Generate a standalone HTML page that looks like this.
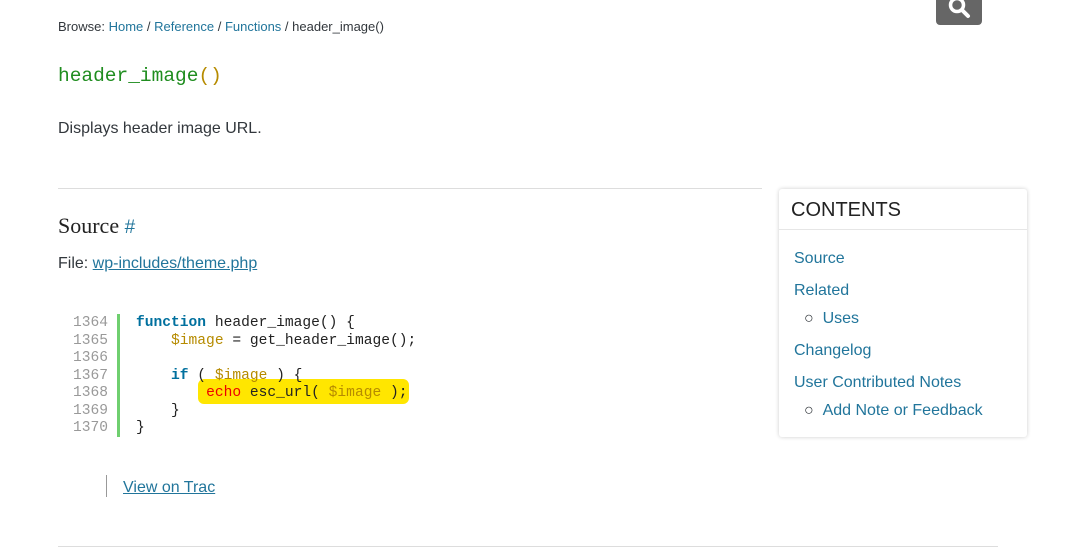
<!DOCTYPE html>
<html><head><style>
body{margin:0;width:1088px;height:560px;background:#fff;position:relative;overflow:hidden;font-family:"Liberation Sans",sans-serif;color:#32373c}
.a{position:absolute;white-space:nowrap}
a{color:#21759b;text-decoration:none}
.u{text-decoration:underline}
.code{font-family:"Liberation Mono",monospace;font-size:14.6px;line-height:17.5px}
.ln{color:#999;text-align:right;width:52px}
.k{color:#00709e;font-weight:bold}
.v{color:#b68b00}
.e{color:#e00}
</style></head><body>
<div class="a" style="left:936px;top:-6px;width:46px;height:31px;background:#666;border-radius:4px">
<svg width="46" height="31" viewBox="0 0 46 31"><circle cx="21" cy="11" r="6.5" fill="none" stroke="#fff" stroke-width="3.5"/><line x1="26" y1="16" x2="32" y2="22" stroke="#fff" stroke-width="4" stroke-linecap="round"/></svg></div>
<div class="a" style="left:58px;top:19px;font-size:13px;color:#32373c">Browse: <a>Home</a> / <a>Reference</a> / <a>Functions</a> / header_image()</div>
<div class="a" style="left:58px;top:65px;font-family:'Liberation Mono',monospace;font-size:19.5px;color:#1f8d1f">header_image<span style="color:#b68b00">()</span></div>
<div class="a" style="left:58px;top:120px;font-size:16px">Displays header image URL.</div>
<div class="a" style="left:58px;top:188px;width:704px;height:1px;background:#ddd"></div>
<div class="a" style="left:58px;top:213px;font-family:'Liberation Serif',serif;font-size:22px;color:#222">Source <a style="font-family:'Liberation Sans',sans-serif;font-size:19px">#</a></div>
<div class="a" style="left:58px;top:255px;font-size:16px">File: <a class="u">wp-includes/theme.php</a></div>
<div class="a code ln" style="left:56px;top:315px">1364<br>1365<br>1366<br>1367<br>1368<br>1369<br>1370</div>
<div class="a" style="left:117px;top:314px;width:3px;height:123px;background:#6fcf6f"></div>
<div class="a" style="left:198px;top:379px;width:211px;height:25px;background:#ffe600;border-radius:6px"></div>
<div class="a code" style="left:136px;top:315px;color:#222;white-space:pre"><span class="k">function</span> header_image() {
    <span class="v">$image</span> = get_header_image();

    <span class="k">if</span> ( <span class="v">$image</span> ) {
        <span class="e">echo</span> esc_url( <span class="v">$image</span> );
    }
}</div>
<div class="a" style="left:106px;top:475px;width:1px;height:22px;background:#999"></div>
<div class="a" style="left:123px;top:479px;font-size:16px"><a class="u">View on Trac</a></div>
<div class="a" style="left:58px;top:546px;width:940px;height:1px;background:#ddd"></div>
<div class="a" style="left:779px;top:189px;width:248px;height:248px;border-radius:3px;box-shadow:0 0 4px rgba(0,0,0,.2);background:#fff">
<div class="a" style="left:12px;top:10px;font-size:20px;color:#222">CONTENTS</div>
<div class="a" style="left:0;top:40px;width:248px;height:1px;background:#e6e6e6"></div>
<div class="a" style="left:15px;top:62px;font-size:16px;line-height:16px"><a>Source</a></div>
<div class="a" style="left:15px;top:94px;font-size:16px;line-height:16px"><a>Related</a></div>
<div class="a" style="left:25px;top:122px;font-size:16px;line-height:16px"><span style="color:#32373c">○</span>&nbsp;&nbsp;<a>Uses</a></div>
<div class="a" style="left:15px;top:154px;font-size:16px;line-height:16px"><a>Changelog</a></div>
<div class="a" style="left:15px;top:186px;font-size:16px;line-height:16px"><a>User Contributed Notes</a></div>
<div class="a" style="left:25px;top:214px;font-size:16px;line-height:16px"><span style="color:#32373c">○</span>&nbsp;&nbsp;<a>Add Note or Feedback</a></div>
</div>
</body></html>
